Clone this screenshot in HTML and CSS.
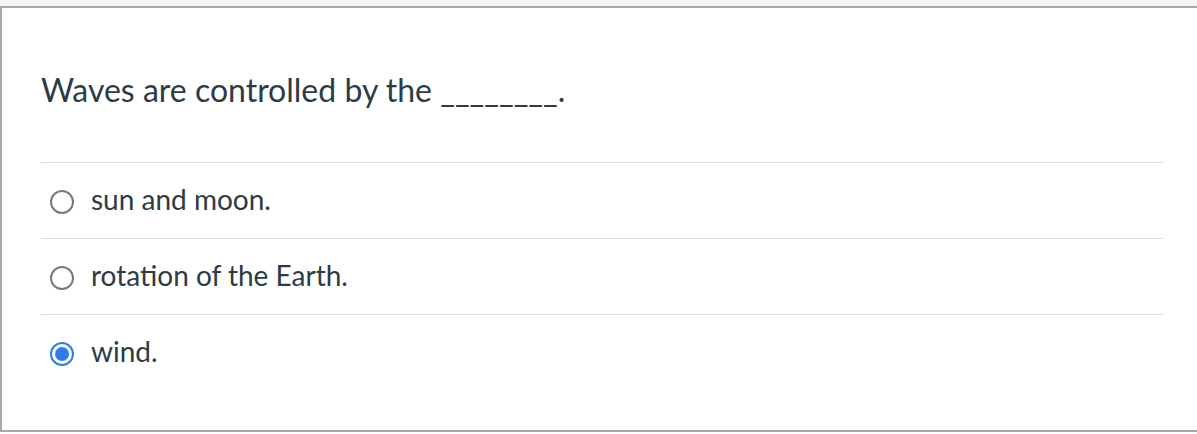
FILE: index.html
```html
<!DOCTYPE html>
<html>
<head>
<meta charset="utf-8">
<link rel="stylesheet" href="styles.css">
</head>
<body>
<div class="topband"></div>
<div class="quiz">
  <div class="question">Waves are controlled by the ________.</div>
  <div class="answers">
    <label class="answer"><span class="radio"></span><span class="text">sun and moon.</span></label>
    <label class="answer"><span class="radio"></span><span class="text">rotation of the Earth.</span></label>
    <label class="answer"><span class="radio checked"></span><span class="text">wind.</span></label>
  </div>
</div>
</body>
</html>
```
FILE: styles.css
```css
html, body {
  margin: 0;
  padding: 0;
  background: #ffffff;
  overflow: hidden;
  width: 1197px;
  height: 434px;
}
body {
  font-family: Lato, "Liberation Sans", sans-serif;
  color: #2d3b45;
}
.topband {
  height: 6px;
  background: #f5f5f5;
}
.quiz {
  box-sizing: border-box;
  width: 1230px;
  height: 426px;
  border-top: 2px solid #a8a8a8;
  border-left: 2px solid #a8a8a8;
  border-bottom: 2px solid #a8a8a8;
  padding: 0 0 0 39px;
}
.question {
  font-size: 32px;
  line-height: 36px;
  padding-top: 64px;
  height: 90px;
  box-sizing: content-box;
  width: 1122px;
}
.answers {
  width: 1122px;
}
.answer {
  display: flex;
  align-items: center;
  height: 75px;
  border-top: 1px solid #dcdcdc;
  font-size: 28px;
}
.radio {
  box-sizing: border-box;
  width: 24px;
  height: 24px;
  border-radius: 50%;
  border: 2px solid #7a7a7a;
  margin-left: 9px;
  margin-right: 17px;
  margin-top: 3px;
  background: #fff;
  flex: none;
  position: relative;
}
.radio.checked {
  border-color: #2f7bf5;
  border-width: 2.5px;
}
.radio.checked::after {
  content: "";
  position: absolute;
  left: 2.5px;
  top: 2.5px;
  width: 14px;
  height: 14px;
  border-radius: 50%;
  background: #2f7bf5;
}
.text {
  line-height: 30px;
  padding-bottom: 4px;
}
```
